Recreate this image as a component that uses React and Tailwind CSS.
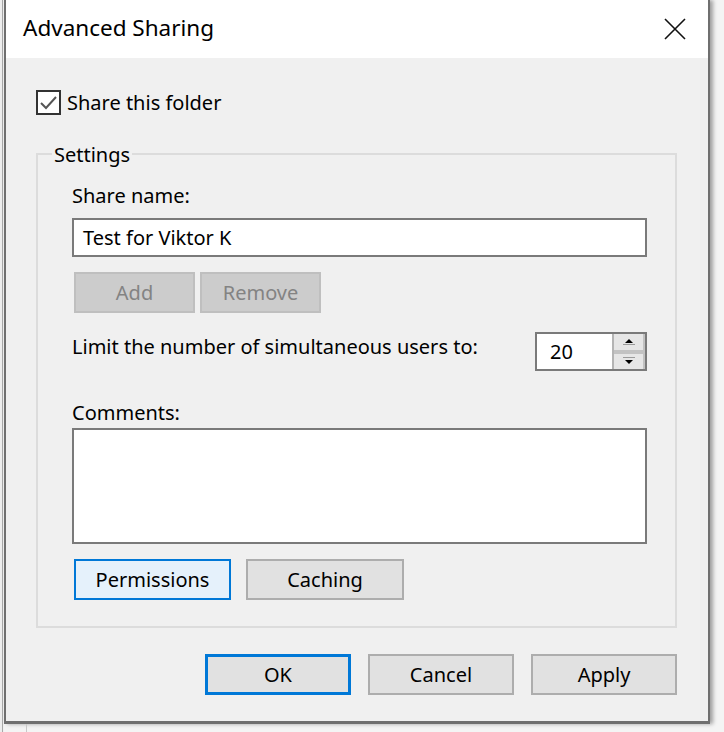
import React from 'react'

function Btn({ label, w, cls }) {
  return (
    <div className={`flex items-center justify-center h-[41px] ${w} ${cls}`}>
      <span>{label}</span>
    </div>
  )
}

function Spinner() {
  return (
    <div className="flex h-[39px] w-[112px] border-2 border-[#7a7a7a] bg-white">
      <div className="flex-1 flex items-center pl-[13px]">20</div>
      <div className="w-[33px] flex flex-col border-l-2 border-[#b4b4b4] bg-[#d4d4d4]">
        <div className="flex-1 flex items-center justify-center bg-[#e6e6e6] border-2 border-[#c2c2c2] border-t-0 border-l-0">
          <svg width="12" height="8" viewBox="0 0 12 8"><path d="M6 1 L10 5 L2 5 Z" fill="#000" /><rect x="0" y="6" width="12" height="1" fill="#9a9a9a" /></svg>
        </div>
        <div className="flex-1 flex items-center justify-center bg-[#e6e6e6] border-2 border-[#c2c2c2] border-l-0 border-b-0">
          <svg width="12" height="8" viewBox="0 0 12 8"><rect x="0" y="0" width="12" height="1" fill="#9a9a9a" /><path d="M2 3 L10 3 L6 7 Z" fill="#000" /></svg>
        </div>
      </div>
    </div>
  )
}

export default function App() {
  return (
    <div className="w-[724px] h-[732px] overflow-hidden bg-[#f4f4f4] flex font-['Noto_Sans',sans-serif] text-[20px] text-black">
      <div className="w-[2px] bg-[#ededed]" />
      <div className="w-[1px] bg-[#a8a8a8]" />
      <div className="w-[1px] bg-[#f0f0f0]" />
      <div className="flex flex-col">
        <div className="w-[706px] h-[724px] flex flex-col border-2 border-t-0 border-b-[3px] border-[#6f6f6f] bg-[#f0f0f0] shadow-[3px_0_4px_rgba(0,0,0,0.35)]">
          {/* title bar */}
          <div className="h-[58px] bg-white flex items-center justify-between pl-[17px] pr-[22px]">
            <span className="text-[22.5px] leading-none mt-[-1px]">Advanced Sharing</span>
            <svg width="22" height="22" viewBox="0 0 22 22">
              <path d="M1 1 L21 21 M21 1 L1 21" stroke="#111" strokeWidth="1.6" />
            </svg>
          </div>

          <div className="flex flex-col pl-[30px] pr-[30px]">
            <div className="flex items-center mt-[32px] h-[25px]">
              <div className="w-[25px] h-[25px] border-2 border-[#333] bg-white flex items-center justify-center">
                <svg width="21" height="21" viewBox="0 0 21 21">
                  <path d="M3 11 L8 16 L18 5" stroke="#555" strokeWidth="2" fill="none" />
                </svg>
              </div>
              <span className="ml-[6px] leading-none mt-[1px]">Share this folder</span>
            </div>

            {/* settings group */}
            <div className="relative mt-[38px] w-[641px] h-[475px] border-2 border-[#dcdcdc] pl-[34px] pr-[28px]">
              <span className="absolute left-[14px] top-[-10px] bg-[#f0f0f0] px-[2px] leading-none">Settings</span>
              <div className="mt-[31px] leading-none">Share name:</div>
              <div className="mt-[12px] h-[39px] border-2 border-[#7a7a7a] bg-white flex items-center pl-[9px]">Test for Viktor K</div>
              <div className="mt-[15px] flex gap-[5px] pl-[2px]">
                <Btn label="Add" w="w-[121px]" cls="bg-[#cccccc] border-2 border-[#bfbfbf] text-[#838383]" />
                <Btn label="Remove" w="w-[121px]" cls="bg-[#cccccc] border-2 border-[#bfbfbf] text-[#838383]" />
              </div>
              <div className="mt-[19px] flex items-center justify-between">
                <span className="mt-[-10px]">Limit the number of simultaneous users to:</span>
                <Spinner />
              </div>
              <div className="mt-[32px] leading-none">Comments:</div>
              <div className="mt-[5px] h-[116px] border-2 border-[#7a7a7a] bg-white" />
              <div className="mt-[15px] flex gap-[15px] pl-[2px]">
                <Btn label="Permissions" w="w-[157px]" cls="bg-[#e5f1fb] border-2 border-[#0078d7]" />
                <Btn label="Caching" w="w-[158px]" cls="bg-[#e1e1e1] border-2 border-[#adadad]" />
              </div>
            </div>

            <div className="mt-[26px] flex justify-end gap-[17px] pr-[1px]">
              <Btn label="OK" w="w-[146px]" cls="bg-[#e1e1e1] border-[3px] border-[#0078d7]" />
              <Btn label="Cancel" w="w-[146px]" cls="bg-[#e1e1e1] border-2 border-[#adadad]" />
              <Btn label="Apply" w="w-[146px]" cls="bg-[#e1e1e1] border-2 border-[#adadad]" />
            </div>
          </div>
        </div>
        <div className="flex h-[8px]">
          <div className="w-[22px]" />
          <div className="w-[1px] bg-[#c8c8c8]" />
        </div>
      </div>
    </div>
  )
}
